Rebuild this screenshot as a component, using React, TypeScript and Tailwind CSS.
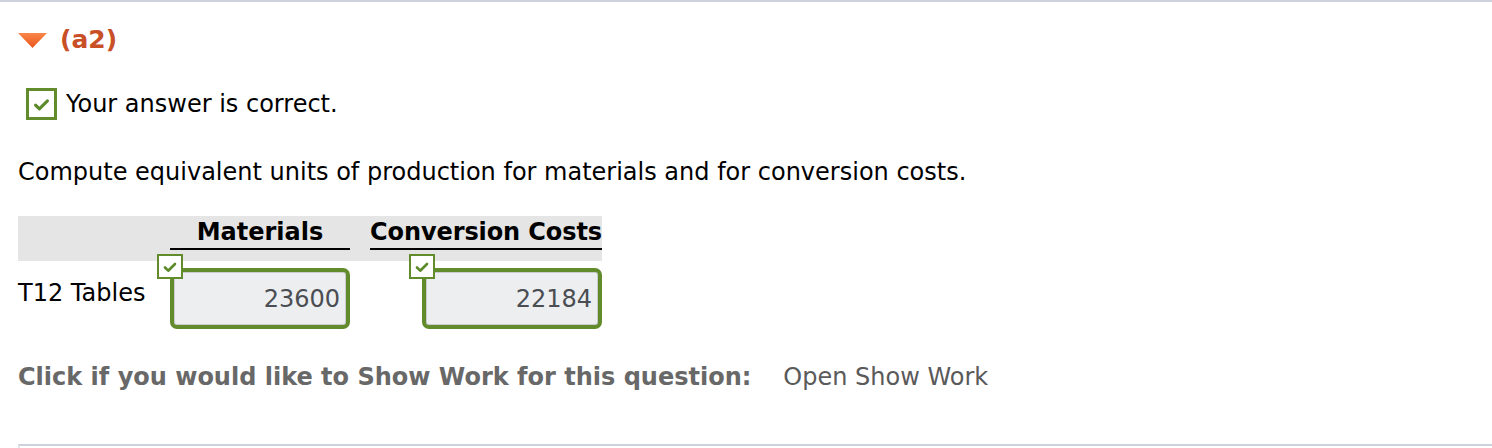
import React from 'react';

const font = { fontFamily: '"DejaVu Sans", Verdana, sans-serif' };

function Check({ className }: { className: string }) {
  return (
    <svg viewBox="0 0 16 16" className={className} fill="none">
      <path d="M3 8.5l3.2 3.2L13 5" stroke="#5b8a2a" strokeWidth="2.6" strokeLinecap="round" strokeLinejoin="round" />
    </svg>
  );
}

function AnswerBox({ value }: { value: string }) {
  return (
    <div className="relative h-[61px] w-[180px]">
      <div className="flex h-full w-full items-center justify-end rounded-[7px] border-4 border-[#628b2c] bg-[#eceef0] pr-[6px] text-[24px] leading-[28px] text-[#4a4d52] shadow-[inset_0_0_0_1px_#c9cbce]">
        {value}
      </div>
      <div className="absolute left-[-13px] top-[-14px] flex h-[25px] w-[26px] items-center justify-center border-2 border-[#628b2c] bg-white">
        <Check className="h-[16px] w-[16px]" />
      </div>
    </div>
  );
}

export default function App() {
  return (
    <div className="h-[448px] w-full overflow-hidden border-t-2 border-[#cdd1dc] bg-white text-black" style={font}>
      {/* Part header */}
      <div className="ml-[18px] mt-[23px] flex h-[30px] items-center gap-[13px]">
        <svg width="29" height="15" viewBox="0 0 29 15">
          <defs>
            <linearGradient id="tri" x1="0" y1="0" x2="0" y2="1">
              <stop offset="0" stopColor="#f9864a" />
              <stop offset="1" stopColor="#e9561c" />
            </linearGradient>
          </defs>
          <polygon points="0,0 29,0 14.5,15" fill="url(#tri)" />
        </svg>
        <span className="text-[25px] font-bold leading-[30px] text-[#c94f27]">(a2)</span>
      </div>

      {/* Correct notice */}
      <div className="ml-[26px] mt-[33px] flex items-center gap-[9px]">
        <div className="flex h-[32px] w-[31px] items-center justify-center border-[3px] border-[#628b2c] bg-white">
          <Check className="h-[19px] w-[19px]" />
        </div>
        <span className="text-[24px] leading-[28px]">Your answer is correct.</span>
      </div>

      <p className="ml-[18px] mt-[38px] text-[24px] leading-[28px]">
        Compute equivalent units of production for materials and for conversion costs.
      </p>

      {/* Table */}
      <div className="ml-[18px] mt-[30px] w-[584px]">
        <div className="flex h-[45px] items-end bg-[#e5e5e5] pb-[11px]">
          <div className="w-[152px]" />
          <div className="w-[180px] border-b-2 border-black pb-[2px] text-center text-[24px] font-bold leading-[28px]">
            Materials
          </div>
          <div className="w-[20px]" />
          <div className="w-[232px] whitespace-nowrap border-b-2 border-black pb-[2px] text-center text-[24px] font-bold leading-[28px] tracking-[-0.1px]">
            Conversion Costs
          </div>
        </div>
        <div className="flex items-start pt-[7px]">
          <div className="mt-[11px] w-[152px] text-[24px] leading-[28px]">T12 Tables</div>
          <div className="w-[180px]">
            <AnswerBox value="23600" />
          </div>
          <div className="w-[20px]" />
          <div className="flex w-[232px] justify-end">
            <AnswerBox value="22184" />
          </div>
        </div>
      </div>

      {/* Show work */}
      <div className="ml-[18px] mt-[34px] flex items-center text-[24px] leading-[28px]">
        <span className="font-bold text-[#686868]">Click if you would like to Show Work for this question:</span>
        <span className="ml-[32px] text-[#5a5a5a]">Open Show Work</span>
      </div>

      <div className="ml-[18px] mt-[53px] h-[20px] border-l-2 border-t-2 border-[#cdd1dc] border-l-[#e2e5ea]" />
    </div>
  );
}
